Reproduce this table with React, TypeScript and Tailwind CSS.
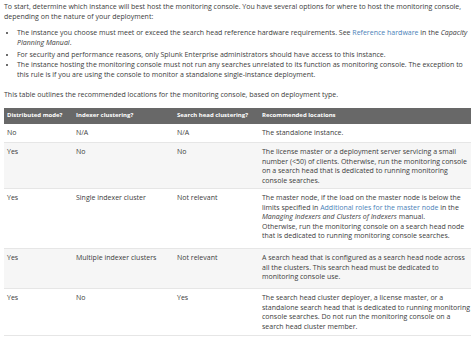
import React from 'react'

const rows = [
  {
    mode: 'No',
    indexer: 'N/A',
    shc: 'N/A',
    rec: <>The standalone instance.</>,
    h: 'h-[19px]',
  },
  {
    mode: 'Yes',
    indexer: 'No',
    shc: 'No',
    rec: (
      <>
        The license master or a deployment server servicing a small number (&lt;50) of clients. Otherwise, run the
        monitoring console on a search head that is dedicated to running monitoring console searches.
      </>
    ),
    h: 'h-[46px]',
  },
  {
    mode: 'Yes',
    indexer: 'Single indexer cluster',
    shc: 'Not relevant',
    rec: (
      <>
        The master node, if the load on the master node is below the limits specified in{' '}
        <span className="text-[#4a7fb8]">Additional roles for the master node</span> in the{' '}
        <em>Managing Indexers and Clusters of Indexers</em> manual.
        <br />
        Otherwise, run the monitoring console on a search head node that is dedicated to running monitoring console
        searches.
      </>
    ),
    h: 'h-[60px]',
  },
  {
    mode: 'Yes',
    indexer: 'Multiple indexer clusters',
    shc: 'Not relevant',
    rec: (
      <>
        A search head that is configured as a search head node across all the clusters. This search head must be
        dedicated to monitoring console use.
      </>
    ),
    h: 'h-[40px]',
  },
  {
    mode: 'Yes',
    indexer: 'No',
    shc: 'Yes',
    rec: (
      <>
        The search head cluster deployer, a license master, or a standalone search head that is dedicated to running
        monitoring console searches. Do not run the monitoring console on a search head cluster member.
      </>
    ),
    h: 'h-[47px]',
  },
]

export default function App() {
  return (
    <div className="w-[474px] h-[339px] overflow-hidden bg-white px-[4px] pt-[2px] text-[7px] leading-[10px] text-[#3c3c3c] font-['Open_Sans',sans-serif]">
      <p>
        To start, determine which instance will best host the monitoring console. You have several options for where
        to host the monitoring console, depending on the nature of your deployment:
      </p>

      <ul className="mt-[6px] pl-[13px] list-disc marker:text-[#3c3c3c]">
        <li>
          The instance you choose must meet or exceed the search head reference hardware requirements. See{' '}
          <span className="text-[#4a7fb8]">Reference hardware</span> in the <em>Capacity Planning Manual</em>.
        </li>
        <li className="mt-[2px]">
          For security and performance reasons, only Splunk Enterprise administrators should have access to this
          instance.
        </li>
        <li>
          The instance hosting the monitoring console must not run any searches unrelated to its function as
          monitoring console. The exception to this rule is if you are using the console to monitor a standalone
          single-instance deployment.
        </li>
      </ul>

      <p className="mt-[10px]">This table outlines the recommended locations for the monitoring console, based on deployment type.</p>

      <div className="mt-[8px] w-[467px] leading-[9.6px]">
        <div className="flex h-[16px] items-center bg-[#686868] text-[6px] font-bold text-white">
          <div className="w-[66px] pl-[3px]">Distributed mode?</div>
          <div className="w-[103px] pl-[6px]">Indexer clustering?</div>
          <div className="w-[86px] pl-[4px]">Search head clustering?</div>
          <div className="flex-1 pl-[3px]">Recommended locations</div>
        </div>
        {rows.map((r, i) => (
          <div
            key={i}
            className={`flex ${r.h} border-b border-[#e6e6e6] pt-[4px] ${i % 2 === 1 ? 'bg-[#f6f6f6]' : 'bg-white'}`}
          >
            <div className="w-[66px] pl-[3px]">{r.mode}</div>
            <div className="w-[103px] pl-[6px]">{r.indexer}</div>
            <div className="w-[86px] pl-[4px]">{r.shc}</div>
            <div className="flex-1 pl-[3px]">{r.rec}</div>
          </div>
        ))}
      </div>
    </div>
  )
}
